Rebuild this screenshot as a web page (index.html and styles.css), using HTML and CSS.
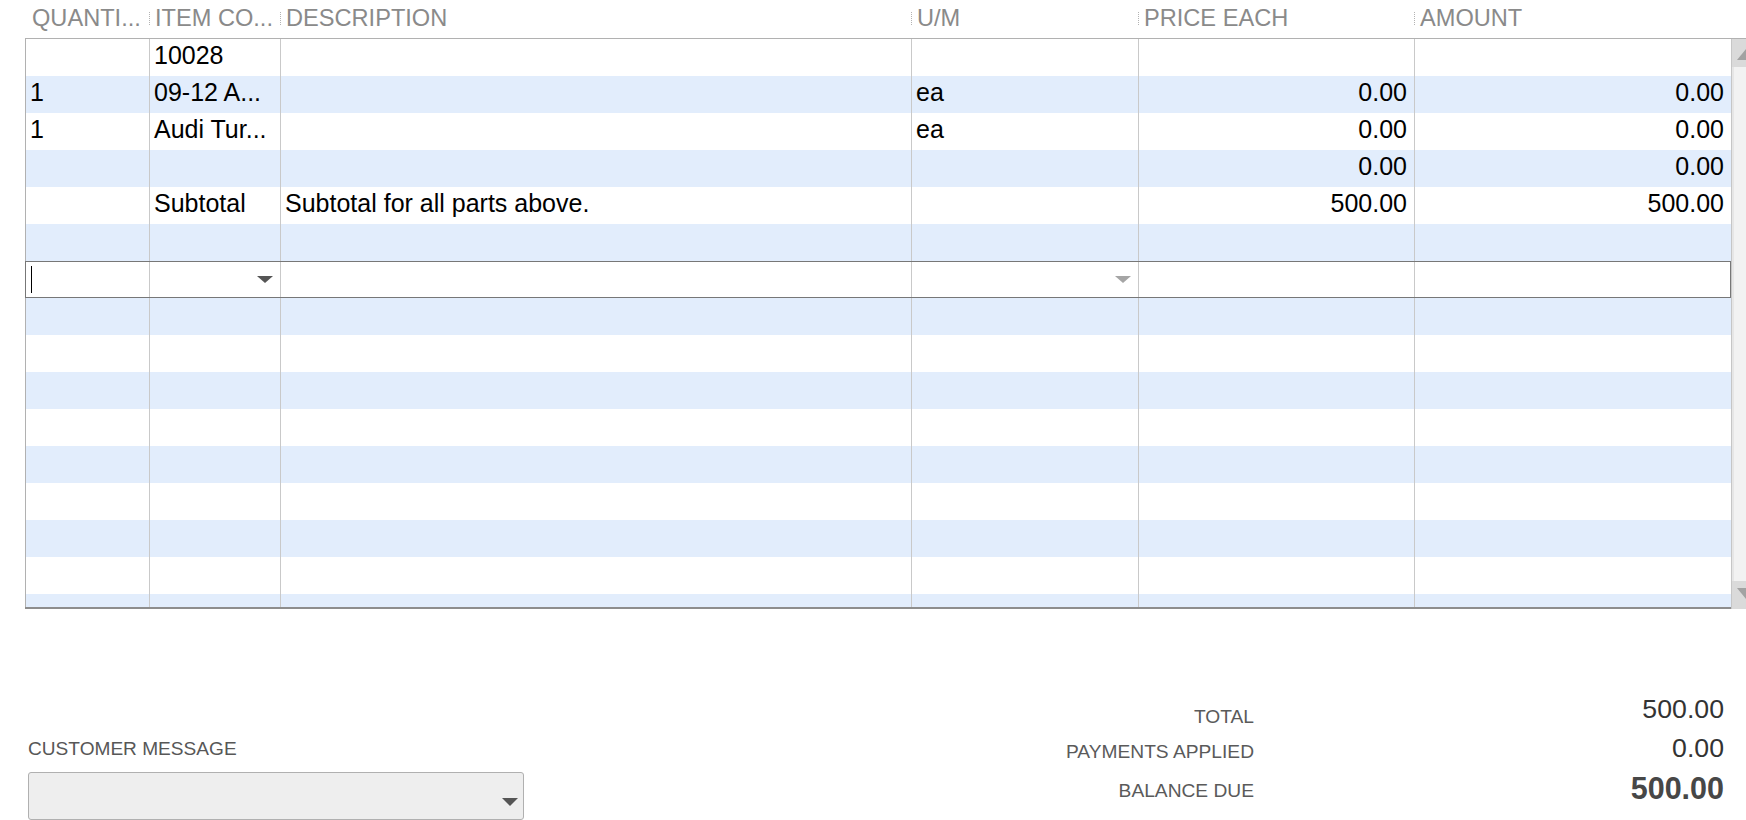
FILE: index.html
```html
<!DOCTYPE html>
<html>
<head>
<meta charset="utf-8">
<link rel="stylesheet" href="styles.css">
</head>
<body>
<div class="header">
  <div class="hcell first"><span class="hlabel">QUANTI...</span></div>
  <div class="hcell"><span class="grip"></span><span class="hlabel">ITEM CO...</span></div>
  <div class="hcell"><span class="grip"></span><span class="hlabel">DESCRIPTION</span></div>
  <div class="hcell"><span class="grip"></span><span class="hlabel">U/M</span></div>
  <div class="hcell"><span class="grip"></span><span class="hlabel">PRICE EACH</span></div>
  <div class="hcell"><span class="grip"></span><span class="hlabel">AMOUNT</span></div>
</div>
<div class="table">
  <div class="rows">
    <div class="row"><div class="c"></div><div class="c">10028</div><div class="c"></div><div class="c"></div><div class="c num"></div><div class="c num"></div></div>
    <div class="row"><div class="c">1</div><div class="c">09-12 A...</div><div class="c"></div><div class="c">ea</div><div class="c num">0.00</div><div class="c num">0.00</div></div>
    <div class="row"><div class="c">1</div><div class="c">Audi Tur...</div><div class="c"></div><div class="c">ea</div><div class="c num">0.00</div><div class="c num">0.00</div></div>
    <div class="row"><div class="c"></div><div class="c"></div><div class="c"></div><div class="c"></div><div class="c num">0.00</div><div class="c num">0.00</div></div>
    <div class="row"><div class="c"></div><div class="c">Subtotal</div><div class="c">Subtotal for all parts above.</div><div class="c"></div><div class="c num">500.00</div><div class="c num">500.00</div></div>
    <div class="row"><div class="c"></div><div class="c"></div><div class="c"></div><div class="c"></div><div class="c"></div><div class="c"></div></div>
    <div class="row edit"><div class="c"><span class="caret"></span></div><div class="c"><span class="dd"></span></div><div class="c"></div><div class="c"><span class="dd light"></span></div><div class="c"></div><div class="c"></div></div>
    <div class="row"><div class="c"></div><div class="c"></div><div class="c"></div><div class="c"></div><div class="c"></div><div class="c"></div></div>
    <div class="row"><div class="c"></div><div class="c"></div><div class="c"></div><div class="c"></div><div class="c"></div><div class="c"></div></div>
    <div class="row"><div class="c"></div><div class="c"></div><div class="c"></div><div class="c"></div><div class="c"></div><div class="c"></div></div>
    <div class="row"><div class="c"></div><div class="c"></div><div class="c"></div><div class="c"></div><div class="c"></div><div class="c"></div></div>
    <div class="row"><div class="c"></div><div class="c"></div><div class="c"></div><div class="c"></div><div class="c"></div><div class="c"></div></div>
    <div class="row"><div class="c"></div><div class="c"></div><div class="c"></div><div class="c"></div><div class="c"></div><div class="c"></div></div>
    <div class="row"><div class="c"></div><div class="c"></div><div class="c"></div><div class="c"></div><div class="c"></div><div class="c"></div></div>
    <div class="row"><div class="c"></div><div class="c"></div><div class="c"></div><div class="c"></div><div class="c"></div><div class="c"></div></div>
    <div class="row"><div class="c"></div><div class="c"></div><div class="c"></div><div class="c"></div><div class="c"></div><div class="c"></div></div>
  </div>
  <div class="scrollbar">
    <div class="sb-btn"><svg width="29" height="28" viewBox="0 0 29 28"><polygon points="5,21 14,10 23,21" fill="#a2a2a2"/></svg></div>
    <div class="sb-track"></div>
    <div class="sb-btn"><svg width="29" height="28" viewBox="0 0 29 28"><polygon points="5,7 23,7 14,18" fill="#a2a2a2"/></svg></div>
  </div>
</div>
<div class="footer">
  <div class="cust">
    <div class="cust-label">CUSTOMER MESSAGE</div>
    <div class="cust-select"><span class="dd dark"></span></div>
  </div>
  <div class="totals">
    <div class="tl r1">TOTAL</div><div class="tv">500.00</div>
    <div class="tl r2">PAYMENTS APPLIED</div><div class="tv">0.00</div>
    <div class="tl r3">BALANCE DUE</div><div class="tv bold">500.00</div>
  </div>
</div>
</body>
</html>
```
FILE: styles.css
```css
html, body {
  margin: 0;
  width: 1746px;
  height: 820px;
  overflow: hidden;
  background: #fff;
  font-family: "Liberation Sans", Arial, sans-serif;
}

.header {
  display: grid;
  grid-template-columns: 124px 131px 631px 227px 276px 316px;
  height: 38px;
  margin-left: 26px;
  color: #8a8a8a;
  font-size: 23.6px;
}
.hcell {
  display: flex;
  align-items: flex-start;
  padding-top: 6px;
  white-space: nowrap;
}
.hcell.first { padding-left: 6px; }
.hlabel { line-height: 24px; }
.grip {
  width: 0;
  height: 13px;
  border-left: 1px dotted #b3b3b3;
  margin: 6px 5px 0 -1px;
}

.table {
  display: flex;
  margin-left: 25px;
  width: max-content;
  border-top: 1px solid #b1b1b1;
}
.rows {
  flex: none;
  width: 1706px;
  height: 568px;
  overflow: hidden;
  border-bottom: 2px solid #8d8d8d;
}
.row {
  display: grid;
  grid-template-columns: 124px 131px 631px 227px 276px 316px;
  height: 37px;
  box-sizing: border-box;
  border-left: 1px solid #b1b1b1;
  font-size: 25px;
  line-height: 33px;
  color: #000;
}
.row:nth-child(even) { background: #e2edfc; }
.c {
  border-right: 1px solid #c9c9c9;
  padding: 0 7px 0 4px;
  white-space: nowrap;
  overflow: hidden;
}
.c:last-child { border-right: none; }
.num { text-align: right; }

.row.edit {
  border: 1px solid #777;
  background: #fff;
}
.edit .c {
  display: flex;
  align-items: center;
}
.caret {
  width: 1px;
  height: 27px;
  background: #000;
  margin-left: 1px;
}
.dd {
  margin-left: auto;
  width: 0;
  height: 0;
  border-left: 8px solid transparent;
  border-right: 8px solid transparent;
  border-top: 7px solid #555;
}
.dd.light { border-top-color: #a5a5a5; }
.dd.dark { border-top: 8px solid #555; }

.scrollbar {
  flex: none;
  width: 30px;
  height: 570px;
  box-sizing: border-box;
  display: flex;
  flex-direction: column;
  border-left: 1px solid #c6c6c6;
  background: linear-gradient(to right, #e6e6e6 0 2px, #f2f2f2 2px);
}
.sb-btn {
  flex: none;
  height: 28px;
  background: #dadada;
}
.sb-btn svg { display: block; }
.sb-track { flex: 1; }

.footer {
  display: flex;
  justify-content: space-between;
  align-items: flex-start;
  padding: 0 22px 0 28px;
}
.cust { margin-top: 130px; }
.cust-label {
  font-size: 19.1px;
  line-height: 19px;
  color: #575757;
  margin-bottom: 14px;
}
.cust-select {
  width: 496px;
  height: 48px;
  box-sizing: border-box;
  background: #eee;
  border: 1px solid #b0b0b0;
  border-radius: 3px;
  display: flex;
  align-items: flex-start;
  justify-content: flex-end;
  padding: 25px 5px 0 0;
}

.totals {
  margin-top: 87px;
  display: grid;
  grid-template-columns: auto 470px;
  grid-template-rows: 39px 38px 39px;
}
.tl {
  font-size: 19.2px;
  line-height: 19px;
  color: #5a5a5a;
  text-align: right;
  white-space: nowrap;
}
.tl.r1 { padding-top: 10.5px; }
.tl.r2 { padding-top: 7px; }
.tl.r3 { padding-top: 7.5px; }
.tv {
  text-align: right;
  font-size: 26.7px;
  line-height: 27px;
  color: #333;
}
.tv.bold {
  font-weight: bold;
  font-size: 30.5px;
  line-height: 30px;
  color: #474747;
}
```
